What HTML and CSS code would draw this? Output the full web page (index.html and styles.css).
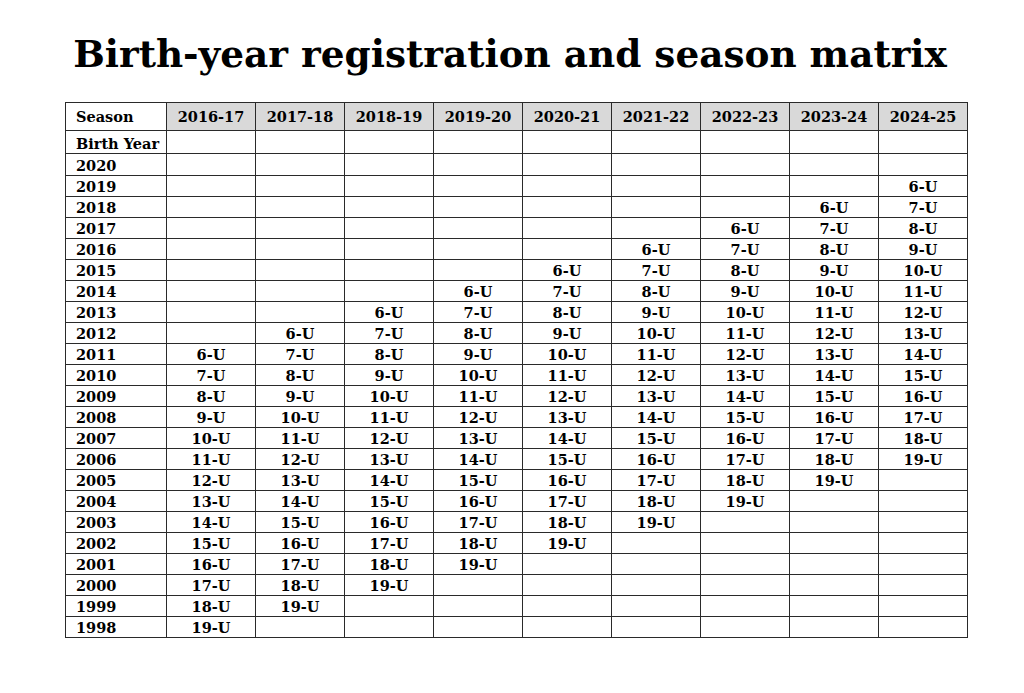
FILE: index.html
```html
<!DOCTYPE html>
<html>
<head>
<meta charset="utf-8">
<link rel="stylesheet" href="styles.css">
</head>
<body>
<h1 class="title">Birth-year registration and season matrix</h1>
<table class="matrix">
<colgroup><col class="c-first"><col class="c-s"><col class="c-s"><col class="c-s"><col class="c-s"><col class="c-s"><col class="c-s"><col class="c-s"><col class="c-s"><col class="c-s"></colgroup>
<thead>
<tr class="head"><th class="lab">Season</th><th>2016-17</th><th>2017-18</th><th>2018-19</th><th>2019-20</th><th>2020-21</th><th>2021-22</th><th>2022-23</th><th>2023-24</th><th>2024-25</th></tr>
</thead>
<tbody>
<tr class="sub"><td class="lab">Birth Year</td><td></td><td></td><td></td><td></td><td></td><td></td><td></td><td></td><td></td></tr>
<tr class="first"><td class="lab">2020</td><td></td><td></td><td></td><td></td><td></td><td></td><td></td><td></td><td></td></tr>
<tr><td class="lab">2019</td><td></td><td></td><td></td><td></td><td></td><td></td><td></td><td></td><td>6-U</td></tr>
<tr><td class="lab">2018</td><td></td><td></td><td></td><td></td><td></td><td></td><td></td><td>6-U</td><td>7-U</td></tr>
<tr><td class="lab">2017</td><td></td><td></td><td></td><td></td><td></td><td></td><td>6-U</td><td>7-U</td><td>8-U</td></tr>
<tr><td class="lab">2016</td><td></td><td></td><td></td><td></td><td></td><td>6-U</td><td>7-U</td><td>8-U</td><td>9-U</td></tr>
<tr><td class="lab">2015</td><td></td><td></td><td></td><td></td><td>6-U</td><td>7-U</td><td>8-U</td><td>9-U</td><td>10-U</td></tr>
<tr><td class="lab">2014</td><td></td><td></td><td></td><td>6-U</td><td>7-U</td><td>8-U</td><td>9-U</td><td>10-U</td><td>11-U</td></tr>
<tr><td class="lab">2013</td><td></td><td></td><td>6-U</td><td>7-U</td><td>8-U</td><td>9-U</td><td>10-U</td><td>11-U</td><td>12-U</td></tr>
<tr><td class="lab">2012</td><td></td><td>6-U</td><td>7-U</td><td>8-U</td><td>9-U</td><td>10-U</td><td>11-U</td><td>12-U</td><td>13-U</td></tr>
<tr><td class="lab">2011</td><td>6-U</td><td>7-U</td><td>8-U</td><td>9-U</td><td>10-U</td><td>11-U</td><td>12-U</td><td>13-U</td><td>14-U</td></tr>
<tr><td class="lab">2010</td><td>7-U</td><td>8-U</td><td>9-U</td><td>10-U</td><td>11-U</td><td>12-U</td><td>13-U</td><td>14-U</td><td>15-U</td></tr>
<tr><td class="lab">2009</td><td>8-U</td><td>9-U</td><td>10-U</td><td>11-U</td><td>12-U</td><td>13-U</td><td>14-U</td><td>15-U</td><td>16-U</td></tr>
<tr><td class="lab">2008</td><td>9-U</td><td>10-U</td><td>11-U</td><td>12-U</td><td>13-U</td><td>14-U</td><td>15-U</td><td>16-U</td><td>17-U</td></tr>
<tr><td class="lab">2007</td><td>10-U</td><td>11-U</td><td>12-U</td><td>13-U</td><td>14-U</td><td>15-U</td><td>16-U</td><td>17-U</td><td>18-U</td></tr>
<tr><td class="lab">2006</td><td>11-U</td><td>12-U</td><td>13-U</td><td>14-U</td><td>15-U</td><td>16-U</td><td>17-U</td><td>18-U</td><td>19-U</td></tr>
<tr><td class="lab">2005</td><td>12-U</td><td>13-U</td><td>14-U</td><td>15-U</td><td>16-U</td><td>17-U</td><td>18-U</td><td>19-U</td><td></td></tr>
<tr><td class="lab">2004</td><td>13-U</td><td>14-U</td><td>15-U</td><td>16-U</td><td>17-U</td><td>18-U</td><td>19-U</td><td></td><td></td></tr>
<tr><td class="lab">2003</td><td>14-U</td><td>15-U</td><td>16-U</td><td>17-U</td><td>18-U</td><td>19-U</td><td></td><td></td><td></td></tr>
<tr><td class="lab">2002</td><td>15-U</td><td>16-U</td><td>17-U</td><td>18-U</td><td>19-U</td><td></td><td></td><td></td><td></td></tr>
<tr><td class="lab">2001</td><td>16-U</td><td>17-U</td><td>18-U</td><td>19-U</td><td></td><td></td><td></td><td></td><td></td></tr>
<tr><td class="lab">2000</td><td>17-U</td><td>18-U</td><td>19-U</td><td></td><td></td><td></td><td></td><td></td><td></td></tr>
<tr><td class="lab">1999</td><td>18-U</td><td>19-U</td><td></td><td></td><td></td><td></td><td></td><td></td><td></td></tr>
<tr><td class="lab">1998</td><td>19-U</td><td></td><td></td><td></td><td></td><td></td><td></td><td></td><td></td></tr>
</tbody>
</table>
</body>
</html>
```
FILE: styles.css
```css
html, body {
  margin: 0;
  padding: 0;
  background: #ffffff;
}
body {
  font-family: "DejaVu Serif", "Liberation Serif", serif;
  color: #000;
  width: 1024px;
  height: 693px;
  overflow: hidden;
}
.title {
  margin: 0;
  padding-top: 30px;
  padding-right: 4px;
  height: 102px;
  box-sizing: border-box;
  font-size: 37.4px;
  line-height: 48px;
  font-weight: bold;
  text-align: center;
}
.matrix {
  margin-left: 65px;
  border-collapse: collapse;
  table-layout: fixed;
  width: 903px;
  font-size: 14.5px;
  font-weight: bold;
}
.c-first { width: 101px; }
.c-s { width: 89px; }
.matrix tr { height: 21px; }
.matrix tr.head { height: 28px; }
.matrix tr.sub { height: 23px; }
.matrix tr.first { height: 22px; }
.matrix th, .matrix td {
  border: 1px solid #2a2a2a;
  padding: 0 4px 1px;
  text-align: center;
  vertical-align: bottom;
  line-height: 16px;
  white-space: nowrap;
  overflow: hidden;
}
.matrix .head th {
  background: #d9d9d9;
  padding-bottom: 5px;
}
.matrix .lab {
  text-align: left;
  padding-left: 10px;
  background: #ffffff;
}
.matrix .head th.lab { background: #ffffff; }
```
